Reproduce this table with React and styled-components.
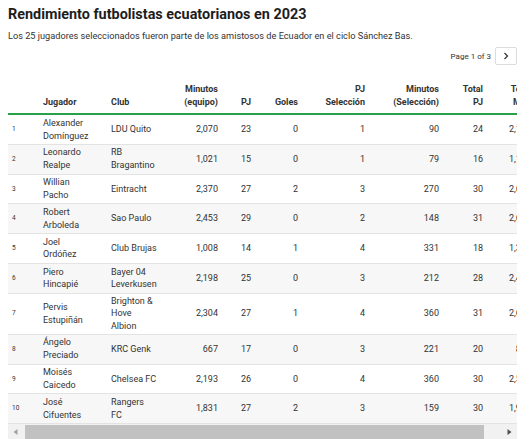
import React from "react";
import styled, { createGlobalStyle } from "styled-components";

const Global = createGlobalStyle`
  html, body { margin: 0; padding: 0; background: #fff; }
  body { font-family: Roboto, "Liberation Sans", Arial, sans-serif; color: #333; }
`;

const Page = styled.div`
  padding: 6px 15px 0 8px;
`;

const Title = styled.h1`
  margin: 0;
  font-size: 14.4px;
  line-height: 18px;
  font-weight: 700;
  color: #1d1d1d;
`;

const Subtitle = styled.p`
  margin: 5px 0 0;
  font-size: 9.2px;
  line-height: 13px;
  color: #333;
`;

const Pager = styled.div`
  display: flex;
  justify-content: flex-end;
  align-items: center;
  gap: 4px;
  margin-top: 5px;
  font-size: 8px;
  color: #333;
`;

const PagerButton = styled.button`
  width: 22px;
  height: 18px;
  padding: 0;
  display: flex;
  align-items: center;
  justify-content: center;
  background: #fff;
  border: 1px solid #dcdcdc;
  border-radius: 2px;
  color: #333;
`;

const Scroller = styled.div`
  margin-top: 12px;
`;

const Clip = styled.div`
  overflow: hidden;
`;

const Table = styled.table`
  width: 531px;
  min-width: 531px;
  table-layout: fixed;
  border-collapse: collapse;
  font-size: 9px;
  line-height: 12.7px;
`;

const Th = styled.th`
  font-weight: 700;
  color: #333;
  vertical-align: bottom;
  padding: 6px 8px 5px;
  text-align: ${(p) => (p.$right ? "right" : "left")};
  border-bottom: 2px solid #2aa049;
  white-space: pre;
`;

const Row = styled.tr`
  height: 29.8px;
  background: ${(p) => (p.$alt ? "#f7f7f7" : "#fff")};
  border-bottom: 1px solid #e3e3e3;
`;

const Td = styled.td`
  padding: 1px 8px;
  vertical-align: middle;
  text-align: ${(p) => (p.$right ? "right" : "left")};
  white-space: pre;
  overflow: hidden;
`;

const IndexCell = styled(Td)`
  font-size: 6.5px;
  padding-left: 4px;
  padding-right: 0;
`;

const ScrollBar = styled.div`
  display: flex;
  height: 15px;
  background: #f1f1f1;
`;

const ScrollButton = styled.div`
  flex: 0 0 15px;
  display: flex;
  align-items: center;
  justify-content: center;
`;

const Track = styled.div`
  flex: 1;
  display: flex;
  padding: 1px 0 0;
`;

const Thumb = styled.div`
  margin-left: 2px;
  background: #c1c1c1;
`;

const Arrow = ({ dir, color }) => (
  <svg width="5" height="6" viewBox="0 0 5 6">
    <polygon points={dir === "left" ? "4.5,0 0.5,3 4.5,6" : "0.5,0 4.5,3 0.5,6"} fill={color} />
  </svg>
);

const cols = [27, 68, 69, 54, 33, 47, 67, 74, 44, 48];
const tableWidth = cols.reduce((a, b) => a + b, 0);
const viewWidth = 509;

const headers = [
  { t: "", r: false },
  { t: "Jugador", r: false },
  { t: "Club", r: false },
  { t: "Minutos\n(equipo)", r: true },
  { t: "PJ", r: true },
  { t: "Goles", r: true },
  { t: "PJ\nSelección", r: true },
  { t: "Minutos\n(Selección)", r: true },
  { t: "Total\nPJ", r: true },
  { t: "Total\nMin.", r: true },
];

const rows = [
  ["Alexander\nDomínguez", "LDU Quito", "2,070", "23", "0", "1", "90", "24", "2,160"],
  ["Leonardo\nRealpe", "RB\nBragantino", "1,021", "15", "0", "1", "79", "16", "1,100"],
  ["Willian\nPacho", "Eintracht", "2,370", "27", "2", "3", "270", "30", "2,640"],
  ["Robert\nArboleda", "Sao Paulo", "2,453", "29", "0", "2", "148", "31", "2,601"],
  ["Joel\nOrdóñez", "Club Brujas", "1,008", "14", "1", "4", "331", "18", "1,339"],
  ["Piero\nHincapié", "Bayer 04\nLeverkusen", "2,198", "25", "0", "3", "212", "28", "2,410"],
  ["Pervis\nEstupiñán", "Brighton &\nHove\nAlbion", "2,304", "27", "1", "4", "360", "31", "2,664"],
  ["Ángelo\nPreciado", "KRC Genk", "667", "17", "0", "3", "221", "20", "888"],
  ["Moisés\nCaicedo", "Chelsea FC", "2,193", "26", "0", "4", "360", "30", "2,553"],
  ["José\nCifuentes", "Rangers\nFC", "1,831", "27", "2", "3", "159", "30", "1,990"],
];

export default function App() {
  const thumbPct = (viewWidth / tableWidth) * 100;
  return (
    <>
      <Global />
      <Page>
        <Title>Rendimiento futbolistas ecuatorianos en 2023</Title>
        <Subtitle>
          Los 25 jugadores seleccionados fueron parte de los amistosos de Ecuador en el ciclo Sánchez Bas.
        </Subtitle>
        <Pager>
          <span>Page 1 of 3</span>
          <PagerButton aria-label="Next page">
            <svg width="6" height="8" viewBox="0 0 6 8">
              <polyline points="1.5,1 4.5,4 1.5,7" fill="none" stroke="#333" strokeWidth="1.2" />
            </svg>
          </PagerButton>
        </Pager>
        <Scroller>
          <Clip>
            <Table>
              <colgroup>
                {cols.map((w, i) => (
                  <col key={i} style={{ width: w }} />
                ))}
              </colgroup>
              <thead>
                <tr>
                  {headers.map((h, i) => (
                    <Th key={i} $right={h.r}>
                      {h.t}
                    </Th>
                  ))}
                </tr>
              </thead>
              <tbody>
                {rows.map((r, i) => (
                  <Row key={i} $alt={i % 2 === 1}>
                    <IndexCell>{i + 1}</IndexCell>
                    <Td>{r[0]}</Td>
                    <Td>{r[1]}</Td>
                    {r.slice(2).map((v, j) => (
                      <Td key={j} $right>
                        {v}
                      </Td>
                    ))}
                  </Row>
                ))}
              </tbody>
            </Table>
          </Clip>
          <ScrollBar>
            <ScrollButton>
              <Arrow dir="left" color="#a3a3a3" />
            </ScrollButton>
            <Track>
              <Thumb style={{ width: `${thumbPct}%` }} />
            </Track>
            <ScrollButton>
              <Arrow dir="right" color="#505050" />
            </ScrollButton>
          </ScrollBar>
        </Scroller>
      </Page>
    </>
  );
}
